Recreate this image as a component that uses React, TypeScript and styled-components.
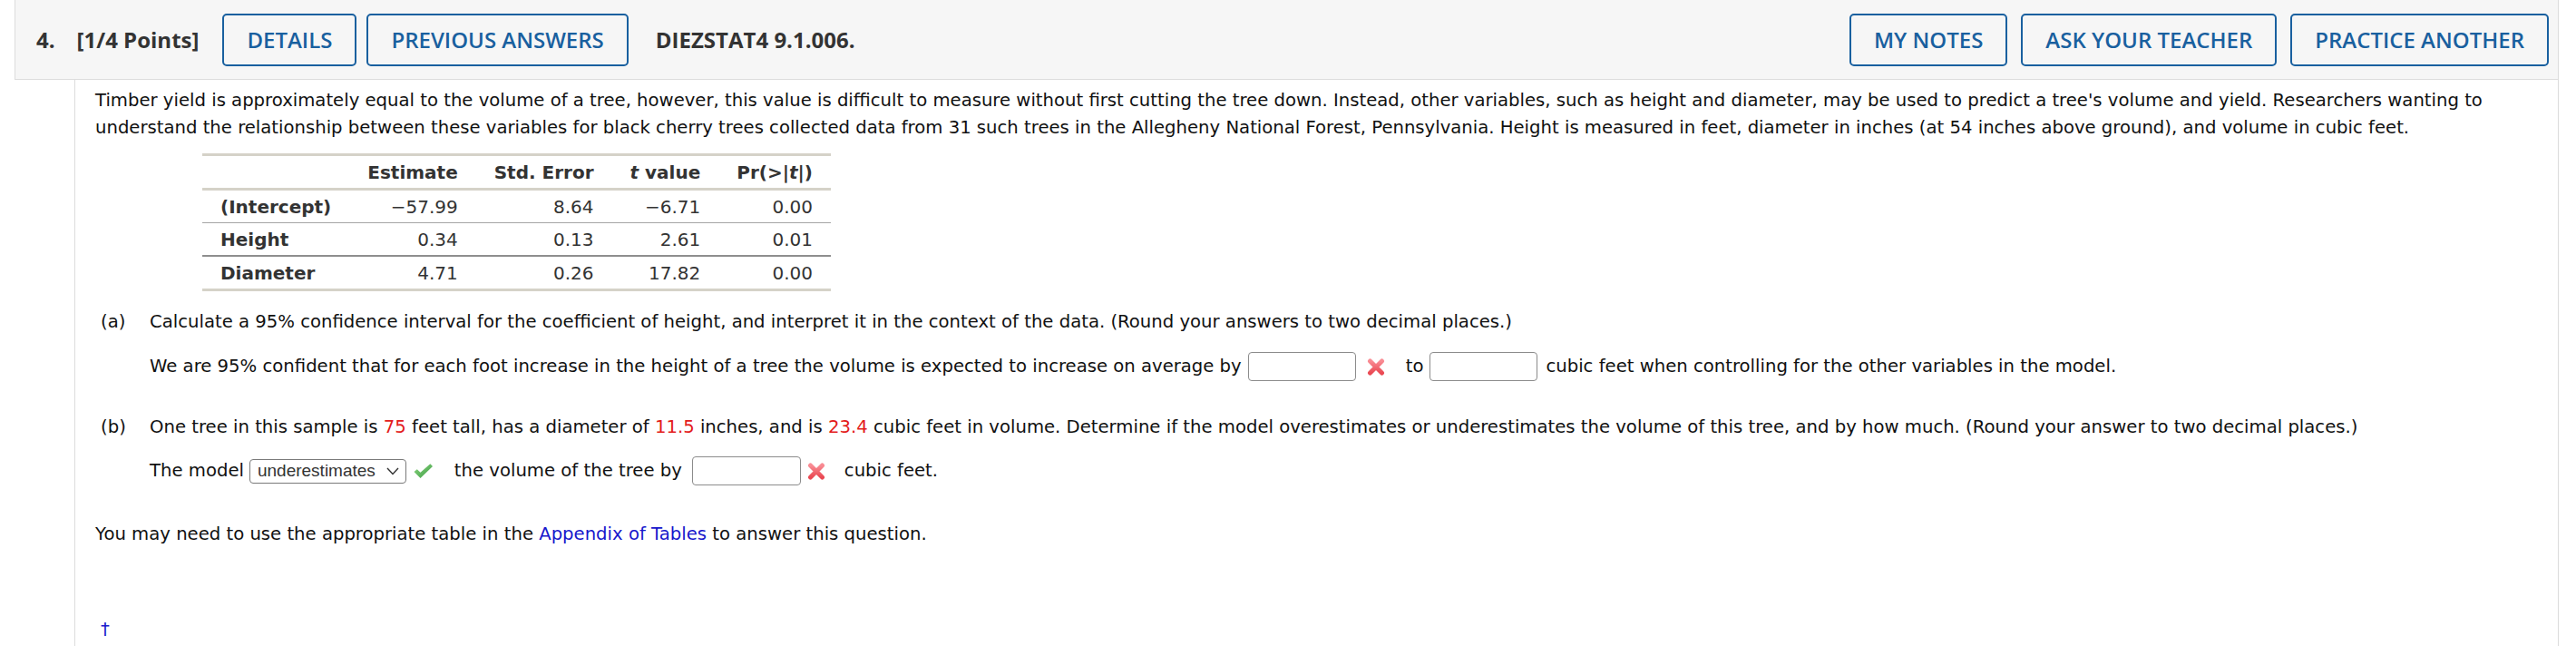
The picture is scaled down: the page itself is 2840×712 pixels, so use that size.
import styled, { createGlobalStyle } from "styled-components";

const GlobalStyle = createGlobalStyle`
  html, body {
    margin: 0;
    padding: 0;
    background: #fff;
  }
  body {
    font-family: "DejaVu Sans", Verdana, sans-serif;
    color: #111;
  }
`;

const rows = [
  { label: "(Intercept)", values: ["\u221257.99", "8.64", "\u22126.71", "0.00"] },
  { label: "Height", values: ["0.34", "0.13", "2.61", "0.01"] },
  { label: "Diameter", values: ["4.71", "0.26", "17.82", "0.00"] },
];

const WrongMark = () => (
  <MarkIcon width="20" height="19" viewBox="0 0 20 19">
    <defs>
      <linearGradient id="wrongGrad" x1="0" y1="0" x2="0" y2="1">
        <stop offset="0" stopColor="#f98c94" />
        <stop offset="1" stopColor="#ea4953" />
      </linearGradient>
    </defs>
    <path
      d="M3.5 3 L16.5 16 M16.5 3 L3.5 16"
      stroke="url(#wrongGrad)"
      strokeWidth="5"
      strokeLinecap="round"
      fill="none"
    />
  </MarkIcon>
);

const RightMark = () => (
  <MarkIcon width="23" height="18" viewBox="0 0 23 18">
    <defs>
      <linearGradient id="rightGrad" x1="0" y1="0" x2="1" y2="1">
        <stop offset="0" stopColor="#8ad47f" />
        <stop offset="1" stopColor="#3f9e45" />
      </linearGradient>
    </defs>
    <path d="M1.5 10 L4.8 7.2 L8.5 10.8 L19.3 1.2 L22 4 L8.5 17 Z" fill="url(#rightGrad)" />
  </MarkIcon>
);

const Chevron = () => (
  <svg width="14" height="9" viewBox="0 0 14 9">
    <polyline points="1,1 7,7.5 13,1" fill="none" stroke="#333" strokeWidth="1.4" />
  </svg>
);

export default function App() {
  return (
    <>
      <GlobalStyle />
      <Page>
        <Header>
          <QNumber>
            4.<Points>[1/4 Points]</Points>
          </QNumber>
          <HeaderButton $ml={26}>DETAILS</HeaderButton>
          <HeaderButton $ml={11}>PREVIOUS ANSWERS</HeaderButton>
          <QCode>DIEZSTAT4 9.1.006.</QCode>
          <Spacer />
          <HeaderButton>MY NOTES</HeaderButton>
          <HeaderButton $ml={15}>ASK YOUR TEACHER</HeaderButton>
          <HeaderButton $ml={15}>PRACTICE ANOTHER</HeaderButton>
        </Header>

        <Body>
          <Intro>
            Timber yield is approximately equal to the volume of a tree, however, this value is
            difficult to measure without first cutting the tree down. Instead, other variables,
            such as height and diameter, may be used to predict a tree's volume and yield.
            Researchers wanting to understand the relationship between these variables for black
            cherry trees collected data from 31 such trees in the Allegheny National Forest,
            Pennsylvania. Height is measured in feet, diameter in inches (at 54 inches above
            ground), and volume in cubic feet.
          </Intro>

          <StatTable>
            <thead>
              <tr>
                <HeadCell />
                <HeadCell>Estimate</HeadCell>
                <HeadCell>Std. Error</HeadCell>
                <HeadCell>
                  <i>t</i> value
                </HeadCell>
                <HeadCell>
                  Pr(&gt;|<i>t</i>|)
                </HeadCell>
              </tr>
            </thead>
            <tbody>
              {rows.map((r, i) => (
                <BodyRow key={r.label} $line={i}>
                  <LabelCell>{r.label}</LabelCell>
                  {r.values.map((v, j) => (
                    <NumCell key={j}>{v}</NumCell>
                  ))}
                </BodyRow>
              ))}
            </tbody>
          </StatTable>

          <Part $mt={19}>
            <PartLabel>(a)</PartLabel>
            <PartContent>
              <Line>
                Calculate a 95% confidence interval for the coefficient of height, and interpret it
                in the context of the data. (Round your answers to two decimal places.)
              </Line>
              <AnswerLine $mt={18}>
                We are 95% confident that for each foot increase in the height of a tree the volume
                is expected to increase on average by
                <AnswerBox $ml={7} />
                <Gap $w={12} />
                <WrongMark />
                <Gap $w={23} />
                to
                <AnswerBox $ml={7} />
                <Gap $w={9} />
                cubic feet when controlling for the other variables in the model.
              </AnswerLine>
            </PartContent>
          </Part>

          <Part $mt={36}>
            <PartLabel>(b)</PartLabel>
            <PartContent>
              <Line>
                One tree in this sample is <Red>75</Red> feet tall, has a diameter of{" "}
                <Red>11.5</Red> inches, and is <Red>23.4</Red> cubic feet in volume. Determine if
                the model overestimates or underestimates the volume of this tree, and by how much.
                (Round your answer to two decimal places.)
              </Line>
              <AnswerLine $mt={17}>
                The model
                <FakeSelect>
                  underestimates
                  <Chevron />
                </FakeSelect>
                <Gap $w={7} />
                <RightMark />
                <Gap $w={23} />
                the volume of the tree by
                <AnswerBox $ml={11} $w={120} />
                <Gap $w={7} />
                <WrongMark />
                <Gap $w={21} />
                cubic feet.
              </AnswerLine>
            </PartContent>
          </Part>

          <Note>
            You may need to use the appropriate table in the <Link>Appendix of Tables</Link> to
            answer this question.
          </Note>

          <Dagger>†</Dagger>
        </Body>
      </Page>
    </>
  );
}

const Page = styled.div`
  padding: 0 19px 0 16px;
  min-height: 712px;
  display: flex;
  flex-direction: column;
  box-sizing: border-box;
`;

const Header = styled.div`
  display: flex;
  align-items: center;
  height: 88px;
  box-sizing: border-box;
  background: #f6f6f6;
  border: 1px solid #dcdcdc;
  border-top: none;
  padding: 0 10px 0 23px;
  font-family: "Open Sans", "DejaVu Sans", sans-serif;
  font-weight: 700;
  font-size: 24px;
  color: #333;
`;

const QNumber = styled.div`
  white-space: nowrap;
`;

const Points = styled.span`
  margin-left: 24px;
`;

const HeaderButton = styled.button<{ $ml?: number }>`
  margin-left: ${(p) => p.$ml ?? 0}px;
  height: 58px;
  padding: 0 25px;
  border: 2px solid #19609f;
  border-radius: 5px;
  background: transparent;
  color: #19609f;
  font-family: "Open Sans", "DejaVu Sans", sans-serif;
  font-weight: 600;
  font-size: 24px;
  white-space: nowrap;
  cursor: pointer;
`;

const QCode = styled.div`
  margin-left: 30px;
  white-space: nowrap;
`;

const Spacer = styled.div`
  flex: 1;
`;

const Body = styled.div`
  flex: 1;
  margin-left: 66px;
  border-left: 1px solid #dcdcdc;
  border-right: 1px solid #dcdcdc;
  padding: 8px 60px 0 22px;
  font-size: 19.65px;
  line-height: 30px;
  color: #111;
`;

const Intro = styled.p`
  margin: 0;
`;

const StatTable = styled.table`
  margin: 13px 0 0 118px;
  border-collapse: collapse;
  border-top: 3px solid #d5d2c8;
  border-bottom: 3px solid #d5d2c8;
  font-size: 20px;
  color: #333;
`;

const HeadCell = styled.th`
  height: 35px;
  padding: 0 20px;
  text-align: right;
  font-weight: 700;
  border-bottom: 3px solid #d5d2c8;
  white-space: nowrap;
`;

const BodyRow = styled.tr<{ $line: number }>`
  border-bottom: ${(p) =>
    p.$line === 0 ? "1px solid #a5a5a5" : p.$line === 1 ? "2px solid #8e8e8e" : "none"};
`;

const LabelCell = styled.td`
  height: 35px;
  padding: 0 20px;
  font-weight: 700;
  text-align: left;
  white-space: nowrap;
`;

const NumCell = styled.td`
  height: 35px;
  padding: 0 20px;
  text-align: right;
  white-space: nowrap;
`;

const Part = styled.div<{ $mt: number }>`
  display: grid;
  grid-template-columns: 60px 1fr;
  margin-top: ${(p) => p.$mt}px;
`;

const PartLabel = styled.div`
  padding-left: 6px;
`;

const PartContent = styled.div`
  display: flex;
  flex-direction: column;
`;

const Line = styled.div``;

const AnswerLine = styled.div<{ $mt: number }>`
  display: flex;
  align-items: center;
  margin-top: ${(p) => p.$mt}px;
  white-space: pre;
`;

const AnswerBox = styled.input.attrs({ type: "text" })<{ $ml?: number; $w?: number }>`
  margin-left: ${(p) => p.$ml ?? 0}px;
  width: ${(p) => p.$w ?? 119}px;
  height: 32px;
  box-sizing: border-box;
  border: 1px solid #8c8c8c;
  border-radius: 4px;
  background: #fff;
  padding: 0 6px;
  font-size: 18px;
`;

const Gap = styled.span<{ $w: number }>`
  display: inline-block;
  width: ${(p) => p.$w}px;
`;

const MarkIcon = styled.svg`
  display: block;
  flex-shrink: 0;
`;

const FakeSelect = styled.div`
  margin-left: 6px;
  display: flex;
  align-items: center;
  gap: 12px;
  height: 27px;
  box-sizing: border-box;
  padding: 0 7px 0 8px;
  border: 1px solid #7a7a7a;
  border-radius: 4px;
  background: #fff;
  font-family: "Liberation Sans", Arial, sans-serif;
  font-size: 19px;
  color: #333;
`;

const Red = styled.span`
  color: #e31b1b;
`;

const Note = styled.div`
  margin-top: 39px;
`;

const Link = styled.span`
  color: #1717cc;
`;

const Dagger = styled.div`
  margin-top: 75px;
  padding-left: 6px;
  color: #1717cc;
`;
